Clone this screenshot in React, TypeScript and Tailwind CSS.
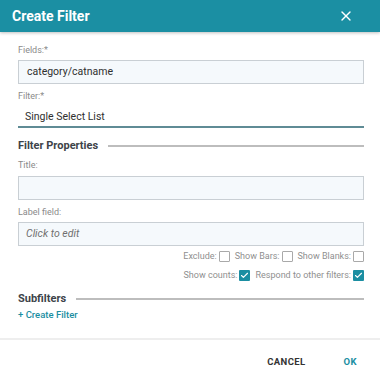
import { X, Check } from "lucide-react";

function Box({ checked }: { checked?: boolean }) {
    return checked ? (
        <span className="ml-[2px] inline-flex h-[11px] w-[11px] items-center justify-center rounded-[1px] bg-[#1b8ea2]">
            <Check size={9} strokeWidth={3} className="text-white" />
        </span>
    ) : (
        <span className="ml-[2px] inline-block h-[11px] w-[11px] rounded-[1px] border border-[#a9a9a9] bg-white" />
    );
}

function Opt({ label, checked }: { label: string; checked?: boolean }) {
    return (
        <span className="ml-[5px] inline-flex items-center">
            {label}
            <Box checked={checked} />
        </span>
    );
}

function Section({ title, className }: { title: string; className?: string }) {
    return (
        <div className={"flex items-center " + (className ?? "")}>
            <span className="text-[11px] leading-[16px] font-bold text-[#3d4349]">{title}</span>
            <div className="ml-[10px] h-[2px] flex-1 bg-[#bdbdbd]" />
        </div>
    );
}

export default function App() {
    return (
        <div className="w-[380px] h-[371px] bg-white overflow-hidden" style={{ fontFamily: "Roboto, 'Liberation Sans', sans-serif" }}>
            <div className="h-[32px] bg-[#1b8fa3] flex items-center justify-between pl-[12px] pr-[26px] shadow-[0_1px_3px_rgba(0,0,0,0.25)] relative">
                <span className="text-white text-[14px] font-bold">Create Filter</span>
                <X size={16} strokeWidth={2} className="text-white" />
            </div>

            <div className="px-[18px] pr-[16px]">
                <div className="mt-[12px] text-[9px] leading-[12px] text-[#8a8a8a]">Fields:*</div>
                <div className="mt-[4px] h-[24px] border border-[#c9cfd4] bg-[#f5f9fc] flex items-center px-[8px] text-[10.5px] text-[#2f2f2f]">
                    category/catname
                </div>
                <div className="mt-[6px] text-[9px] leading-[12px] text-[#8a8a8a]">Filter:*</div>
                <div className="mt-[2px] h-[24px] border-b-2 border-[#5f8b95] flex items-center pt-[3px] px-[7px] text-[10.5px] text-[#2f2f2f]">
                    Single Select List
                </div>

                <Section title="Filter Properties" className="mt-[10px]" />

                <div className="mt-[5px] text-[9px] leading-[12px] text-[#8a8a8a]">Title:</div>
                <div className="mt-[5px] h-[24px] border border-[#c9cfd4] bg-[#f5f9fc]" />
                <div className="mt-[6px] text-[9px] leading-[12px] text-[#8a8a8a]">Label field:</div>
                <div className="mt-[4px] h-[24px] border border-[#c9cfd4] bg-[#f5f9fc] flex items-center px-[7px] text-[10.5px] italic text-[#6f6f6f]">
                    Click to edit
                </div>

                <div className="mt-[4px] flex justify-end text-[9px] leading-[12px] text-[#8f8f8f]">
                    <Opt label="Exclude:" />
                    <Opt label="Show Bars:" />
                    <Opt label="Show Blanks:" />
                </div>
                <div className="mt-[7px] flex justify-end text-[9px] leading-[12px] text-[#8f8f8f]">
                    <Opt label="Show counts:" checked />
                    <Opt label="Respond to other filters:" checked />
                </div>

                <Section title="Subfilters" className="mt-[10px]" />
                <div className="mt-[1px] text-[9.5px] leading-[14px] font-medium text-[#1b8ea2]">+ Create Filter</div>
            </div>

            <div className="mt-[16px] h-[2px] bg-[#eeeeee]" />
            <div className="flex justify-end items-center h-[44px] pr-[23px] text-[9.5px] font-bold tracking-[0.4px]">
                <button className="text-[#333]">CANCEL</button>
                <button className="ml-[38px] text-[#1b8ea2]">OK</button>
            </div>
        </div>
    );
}
